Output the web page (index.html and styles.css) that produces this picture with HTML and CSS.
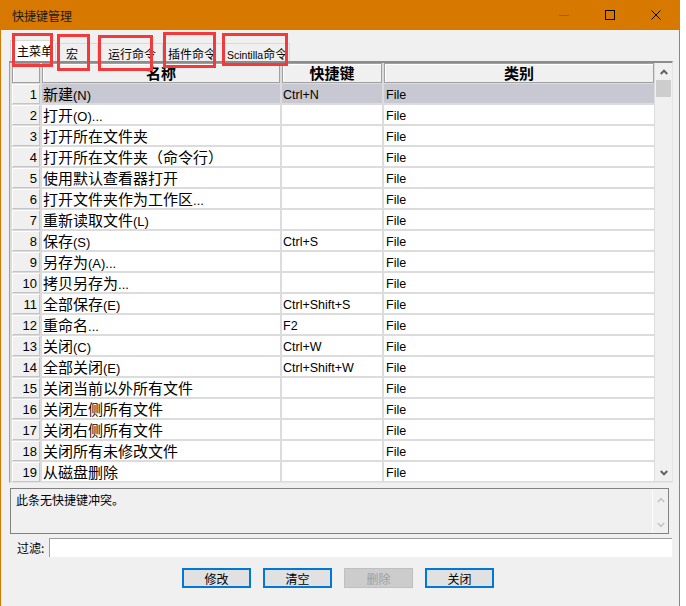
FILE: index.html
```html
<!DOCTYPE html>
<html lang="zh-CN">
<head>
<meta charset="utf-8">
<title>快捷键管理</title>
<link rel="stylesheet" href="styles.css">
</head>
<body>
<div class="window">
  <div class="titlebar">
    <span class="title">快捷键管理</span>
    <div class="controls">
      <span class="ctl"><svg width="10" height="1" viewBox="0 0 10 1"><rect width="10" height="1" fill="#000" fill-opacity="0.22"/></svg></span>
      <span class="ctl"><svg width="10" height="10" viewBox="0 0 10 10"><rect x="0.5" y="0.5" width="9" height="9" fill="none" stroke="#000" stroke-width="1"/></svg></span>
      <span class="ctl"><svg width="10" height="10" viewBox="0 0 10 10"><path d="M0.5 0.5L9.5 9.5M9.5 0.5L0.5 9.5" stroke="#000" stroke-width="1"/></svg></span>
    </div>
  </div>
  <div class="tabs">
    <div class="tab sel t1">主菜单</div>
    <div class="tab t2">宏</div>
    <div class="tab t3">运行命令</div>
    <div class="tab t4">插件命令</div>
    <div class="tab t5 last"><span class="lt">Scintilla</span>命令</div>
  </div>
  <div class="table">
    <div class="rows">
      <div class="row head"><div></div><div>名称</div><div>快捷键</div><div>类别</div></div>
      <div class="row sel"><div class="n">1</div><div class="c nm">新建<span class="l">(N)</span></div><div class="c a">Ctrl+N</div><div class="c a k">File</div></div>
      <div class="row"><div class="n">2</div><div class="c nm">打开<span class="l">(O)...</span></div><div class="c a"></div><div class="c a k">File</div></div>
      <div class="row"><div class="n">3</div><div class="c nm">打开所在文件夹</div><div class="c a"></div><div class="c a k">File</div></div>
      <div class="row"><div class="n">4</div><div class="c nm">打开所在文件夹（命令行）</div><div class="c a"></div><div class="c a k">File</div></div>
      <div class="row"><div class="n">5</div><div class="c nm">使用默认查看器打开</div><div class="c a"></div><div class="c a k">File</div></div>
      <div class="row"><div class="n">6</div><div class="c nm">打开文件夹作为工作区<span class="l">...</span></div><div class="c a"></div><div class="c a k">File</div></div>
      <div class="row"><div class="n">7</div><div class="c nm">重新读取文件<span class="l">(L)</span></div><div class="c a"></div><div class="c a k">File</div></div>
      <div class="row"><div class="n">8</div><div class="c nm">保存<span class="l">(S)</span></div><div class="c a">Ctrl+S</div><div class="c a k">File</div></div>
      <div class="row"><div class="n">9</div><div class="c nm">另存为<span class="l">(A)...</span></div><div class="c a"></div><div class="c a k">File</div></div>
      <div class="row"><div class="n">10</div><div class="c nm">拷贝另存为<span class="l">...</span></div><div class="c a"></div><div class="c a k">File</div></div>
      <div class="row"><div class="n">11</div><div class="c nm">全部保存<span class="l">(E)</span></div><div class="c a">Ctrl+Shift+S</div><div class="c a k">File</div></div>
      <div class="row"><div class="n">12</div><div class="c nm">重命名<span class="l">...</span></div><div class="c a">F2</div><div class="c a k">File</div></div>
      <div class="row"><div class="n">13</div><div class="c nm">关闭<span class="l">(C)</span></div><div class="c a">Ctrl+W</div><div class="c a k">File</div></div>
      <div class="row"><div class="n">14</div><div class="c nm">全部关闭<span class="l">(E)</span></div><div class="c a">Ctrl+Shift+W</div><div class="c a k">File</div></div>
      <div class="row"><div class="n">15</div><div class="c nm">关闭当前以外所有文件</div><div class="c a"></div><div class="c a k">File</div></div>
      <div class="row"><div class="n">16</div><div class="c nm">关闭左侧所有文件</div><div class="c a"></div><div class="c a k">File</div></div>
      <div class="row"><div class="n">17</div><div class="c nm">关闭右侧所有文件</div><div class="c a"></div><div class="c a k">File</div></div>
      <div class="row"><div class="n">18</div><div class="c nm">关闭所有未修改文件</div><div class="c a"></div><div class="c a k">File</div></div>
      <div class="row"><div class="n">19</div><div class="c nm">从磁盘删除</div><div class="c a"></div><div class="c a k">File</div></div>
    </div>
    <div class="vscroll">
      <div class="arrow"><svg width="8" height="6" viewBox="0 0 8 6"><polyline points="0.8,5 4,1.6 7.2,5" fill="none" stroke="#606060" stroke-width="2"/></svg></div>
      <div class="thumb"></div>
      <div class="spacer"></div>
      <div class="arrow"><svg width="8" height="6" viewBox="0 0 8 6"><polyline points="0.8,1 4,4.4 7.2,1" fill="none" stroke="#606060" stroke-width="2"/></svg></div>
    </div>
  </div>
  <div class="conflict">
    <div class="msg">此条无快捷键冲突。</div>
    <div class="cscroll">
      <div class="arrow"><svg width="8" height="6" viewBox="0 0 8 6"><polyline points="0.8,5 4,1.6 7.2,5" fill="none" stroke="#c4c4c4" stroke-width="1.6"/></svg></div>
      <div class="arrow"><svg width="8" height="6" viewBox="0 0 8 6"><polyline points="0.8,1 4,4.4 7.2,1" fill="none" stroke="#c4c4c4" stroke-width="1.6"/></svg></div>
    </div>
  </div>
  <div class="filter">
    <span class="lbl">过滤:</span>
    <div class="input"></div>
  </div>
  <div class="buttons">
    <div class="btn">修改</div>
    <div class="btn">清空</div>
    <div class="btn dis">删除</div>
    <div class="btn">关闭</div>
  </div>
</div>
<div class="mark m1"></div>
<div class="mark m2"></div>
<div class="mark m3"></div>
<div class="mark m4"></div>
<div class="mark m5"></div>
</body>
</html>
```
FILE: styles.css
```css
* { box-sizing: border-box; }
body {
  margin: 0;
  background: #fff;
  font-family: "Noto Sans CJK SC", sans-serif;
  color: #000;
}
.window {
  width: 680px;
  height: 606px;
  border-left: 1px solid #d77800;
  border-right: 1px solid #d77800;
  background: #f0f0f0;
  overflow: hidden;
}
.titlebar {
  height: 30px;
  background: #d77800;
  display: flex;
  align-items: center;
}
.title {
  flex: 1;
  padding-left: 11px;
  font-size: 12px;
  color: #1a1a1a;
}
.controls { display: flex; height: 30px; }
.ctl {
  width: 46px;
  height: 30px;
  display: flex;
  align-items: center;
  justify-content: center;
}
.ctl svg { display: block; }

/* tabs */
.tabs {
  display: flex;
  align-items: flex-end;
  height: 31px;
  padding-top: 10px;
  padding-left: 9px;
}
.tab {
  height: 18px;
  border-top: 1px solid #d9d9d9;
  border-left: 1px solid #d9d9d9;
  background: #f0f0f0;
  font-size: 12px;
  line-height: 16px;
  padding-top: 2px;
  white-space: nowrap;
  overflow: hidden;
}
.tab.sel {
  height: 21px;
  background: #fff;
  padding-top: 2px;
}
.tab.last { border-right: 1px solid #d9d9d9; }
.t1 { width: 45px; padding-left: 6px; }
.t2 { width: 42px; padding-left: 10px; }
.t3 { width: 65px; padding-left: 10px; }
.t4 { width: 60px; padding-left: 5px; }
.t5 { width: 68px; padding-left: 4px; }
.lt { font-family: "Liberation Sans", sans-serif; font-size: 10.5px; }

/* table */
.table {
  display: flex;
  width: 664px;
  margin-left: 8px;
  border-top: 2px solid #8c8c8c;
  border-left: 1px solid #a0a0a0;
  border-right: 1px solid #e4e4e4;
  border-bottom: 1px solid #e4e4e4;
  padding: 0 0 1px 2px;
  background: #dcdcdc;
}
.rows {
  width: 642px;
  display: flex;
  flex-direction: column;
  gap: 2px;
}
.row {
  display: grid;
  grid-template-columns: 28px 238px 100px 270px;
  column-gap: 2px;
  height: 19px;
}
.row.head { height: 20px; margin-bottom: -1px; }
.row.head > div {
  background: #f0f0f0;
  border: 1px solid #a0a0a0;
  box-shadow: inset 1px 1px 0 #fff;
  font-weight: bold;
  font-size: 15px;
  line-height: 18px;
  text-align: center;
}
.n {
  background: #f0f0f0;
  border-top: 1px solid #fff;
  border-left: 1px solid #fff;
  border-right: 1px solid #c4c4c4;
  border-bottom: 1px solid #c4c4c4;
  text-align: right;
  padding-right: 2px;
  padding-top: 1px;
  font-family: "Liberation Sans", sans-serif;
  font-size: 13px;
  line-height: 17px;
}
.c {
  background: #fff;
  height: 19px;
  line-height: 19px;
  overflow: hidden;
  white-space: nowrap;
}
.nm {
  padding-left: 1px;
  font-family: "Noto Sans CJK SC", sans-serif;
  font-size: 15px;
}
.l {
  font-family: "Liberation Sans", sans-serif;
  font-size: 13px;
}
.a {
  padding-left: 1px;
  padding-top: 2px;
  font-family: "Liberation Sans", sans-serif;
  font-size: 12.5px;
}
.a.k { padding-left: 2px; }
.row.sel .c { background: #c8c8d2; }

.vscroll {
  width: 17px;
  margin-left: 1px;
  background: #f0f0f0;
  display: flex;
  flex-direction: column;
}
.arrow {
  height: 17px;
  display: flex;
  align-items: center;
  justify-content: center;
}
.arrow svg { display: block; }
.thumb { height: 17px; margin: 0 1px; background: #cdcdcd; }
.spacer { flex: 1; }

/* conflict box */
.conflict {
  margin: 5px 0 0 9px;
  width: 659px;
  height: 46px;
  border: 1px solid #828282;
  display: flex;
}
.msg {
  flex: 1;
  padding-left: 5px;
  padding-top: 1px;
  font-size: 12px;
  line-height: 20px;
}
.cscroll {
  width: 16px;
  border-left: 1px solid #fafafa;
  padding-top: 2px;
  display: flex;
  flex-direction: column;
  justify-content: space-between;
}

/* filter */
.filter {
  display: flex;
  margin-top: 4px;
  height: 19px;
}
.lbl {
  width: 48px;
  padding-left: 16px;
  font-size: 12px;
  line-height: 19px;
}
.input {
  width: 623px;
  background: #fff;
  border-top: 1px solid #a0a0a0;
  border-left: 1px solid #a0a0a0;
}

/* buttons */
.buttons {
  display: flex;
  gap: 12px;
  margin-top: 11px;
  padding-left: 181px;
}
.btn {
  width: 69px;
  height: 20px;
  border: 2px solid #0078d7;
  background: #e1e1e1;
  font-size: 12px;
  display: flex;
  align-items: center;
  justify-content: center;
}
.btn.dis {
  border: 1px solid #bfbfbf;
  background: #cccccc;
  color: #a0a0a0;
}

/* red annotation boxes */
.mark {
  position: absolute;
  border: 3px solid #f03a3c;
}
.m1 { left: 12px; top: 33px; width: 41px; height: 34px; }
.m2 { left: 57px; top: 34px; width: 33px; height: 37px; }
.m3 { left: 98px; top: 35px; width: 55px; height: 36px; }
.m4 { left: 163px; top: 32px; width: 53px; height: 36px; }
.m5 { left: 222px; top: 33px; width: 66px; height: 33px; }
```
